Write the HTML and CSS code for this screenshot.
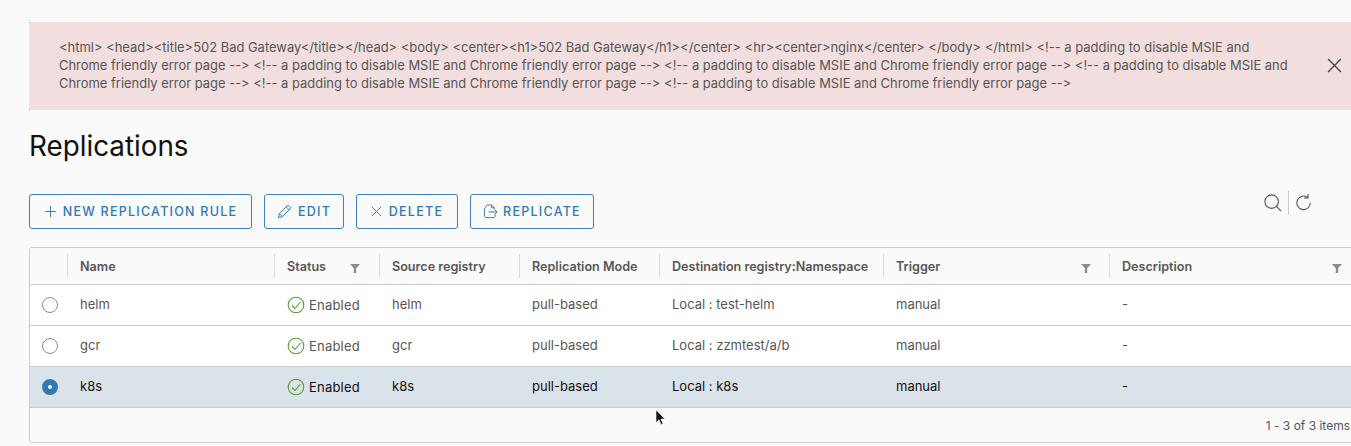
FILE: index.html
```html
<!DOCTYPE html>
<html lang="en">
<head>
  <meta charset="UTF-8">
  <title>Replications</title>
  <link rel="stylesheet" href="styles.css">
</head>
<body>
  <div class="alert">
    <p class="alert-text">&lt;html&gt; &lt;head&gt;&lt;title&gt;502 Bad Gateway&lt;/title&gt;&lt;/head&gt; &lt;body&gt; &lt;center&gt;&lt;h1&gt;502 Bad Gateway&lt;/h1&gt;&lt;/center&gt; &lt;hr&gt;&lt;center&gt;nginx&lt;/center&gt; &lt;/body&gt; &lt;/html&gt; &lt;!-- a padding to disable MSIE and<br>Chrome friendly error page --&gt; &lt;!-- a padding to disable MSIE and Chrome friendly error page --&gt; &lt;!-- a padding to disable MSIE and Chrome friendly error page --&gt; &lt;!-- a padding to disable MSIE and<br>Chrome friendly error page --&gt; &lt;!-- a padding to disable MSIE and Chrome friendly error page --&gt; &lt;!-- a padding to disable MSIE and Chrome friendly error page --&gt;</p>
    <svg class="alert-close" viewBox="0 0 14 14"><path d="M1 1l12 12M13 1L1 13"/></svg>
  </div>

  <h1 class="title">Replications</h1>

  <div class="toolbar">
    <button class="btn btn-new"><svg viewBox="0 0 14 14"><path d="M7 1v12M1 7h12"/></svg>NEW REPLICATION RULE</button>
    <button class="btn btn-edit"><svg viewBox="0 0 16 16"><path d="M1.5 14.5l1-4.2L11 1.8a1.2 1.2 0 0 1 1.7 0l1.5 1.5a1.2 1.2 0 0 1 0 1.7L5.700 13.500zM2.500 10.300l3.200 3.200M9.800 3l3.200 3.200"/></svg>EDIT</button>
    <button class="btn btn-delete"><svg viewBox="0 0 12 12"><path d="M1 1l10 10M11 1L1 11"/></svg>DELETE</button>
    <button class="btn btn-replicate"><svg viewBox="0 0 16 16"><path d="M12 5.500V4L9 1H4.500L3 2.500v1L1.500 5v8.500l1 1H12l1-1V11M9 1v3h3M6 8.500h9M12.500 6l2.500 2.500-2.500 2.500"/></svg>REPLICATE</button>
    <div class="tools">
      <svg class="tool-icon" viewBox="0 0 20 20"><circle cx="8.500" cy="8.500" r="7.500"/><path d="M14 14l5 5"/></svg>
      <span class="tool-sep"></span>
      <svg class="tool-icon" viewBox="0 0 20 20"><path d="M17 10a7.500 7.500 0 1 1-3-6.200M14.500 0v4.500H10"/></svg>
    </div>
  </div>

  <div class="grid">
    <div class="row head">
      <div class="cell"></div>
      <div class="cell">Name</div>
      <div class="cell">Status<svg class="filter" viewBox="0 0 10 10"><path d="M0 1h10L6.200 5.200V10H3.800V5.200z"/></svg></div>
      <div class="cell">Source registry</div>
      <div class="cell">Replication Mode</div>
      <div class="cell">Destination registry:Namespace</div>
      <div class="cell">Trigger<svg class="filter" viewBox="0 0 10 10"><path d="M0 1h10L6.200 5.200V10H3.800V5.200z"/></svg></div>
      <div class="cell">Description<svg class="filter" viewBox="0 0 10 10"><path d="M0 1h10L6.200 5.200V10H3.800V5.200z"/></svg></div>
    </div>

    <div class="row">
      <div class="cell"><span class="radio"></span></div>
      <div class="cell">helm</div>
      <div class="cell status"><svg class="ok" viewBox="0 0 18 18"><circle cx="9" cy="9" r="7.800"/><path d="M5 9.500l3 3 5.500-6.500"/></svg>Enabled</div>
      <div class="cell">helm</div>
      <div class="cell">pull-based</div>
      <div class="cell">Local : test-helm</div>
      <div class="cell">manual</div>
      <div class="cell">-</div>
    </div>
    <div class="row">
      <div class="cell"><span class="radio"></span></div>
      <div class="cell">gcr</div>
      <div class="cell status"><svg class="ok" viewBox="0 0 18 18"><circle cx="9" cy="9" r="7.800"/><path d="M5 9.500l3 3 5.500-6.500"/></svg>Enabled</div>
      <div class="cell">gcr</div>
      <div class="cell">pull-based</div>
      <div class="cell">Local : zzmtest/a/b</div>
      <div class="cell">manual</div>
      <div class="cell">-</div>
    </div>
    <div class="row selected">
      <div class="cell"><span class="radio checked"></span></div>
      <div class="cell">k8s</div>
      <div class="cell status"><svg class="ok" viewBox="0 0 18 18"><circle cx="9" cy="9" r="7.800"/><path d="M5 9.500l3 3 5.500-6.500"/></svg>Enabled</div>
      <div class="cell">k8s</div>
      <div class="cell">pull-based</div>
      <div class="cell">Local : k8s</div>
      <div class="cell">manual</div>
      <div class="cell">-</div>
    </div>

    <div class="grid-foot">1 - 3 of 3 items</div>
  </div>

  <svg class="cursor" viewBox="0 0 11 17"><path d="M1 1v12.500l3-2.800 2 4.800 2-.8-2-4.700h4z"/></svg>
</body>
</html>
```

FILE: styles.css
```css
* {
  box-sizing: border-box;
}
html, body {
  height: 446px;
  overflow: hidden;
}
body {
  margin: 0;
  padding: 22px 0 0 29px;
  background: #fafafa;
  color: #565656;
  font-family: Inter, "Noto Sans", sans-serif;
  font-size: 13px;
  font-variant-ligatures: none;
  font-feature-settings: "calt" 0;
}
svg {
  fill: none;
  stroke: currentColor;
  stroke-width: 1;
}

.alert {
  display: flex;
  align-items: center;
  justify-content: space-between;
  height: 88px;
  padding: 0 9px 0 29px;
  background: #f2dede;
  border-left: 1px solid #f2dede;
  border-image: linear-gradient(#7fa8cc 2px, #f2dede 2px, #f2dede 86px, #7fa8cc 86px) 1;
}
.alert-text {
  margin: -2px 0 0;
  font-size: 12.950px;
  line-height: 18px;
  color: #565656;
  white-space: nowrap;
}
.alert-close {
  width: 15px;
  height: 15px;
  margin-top: -2px;
  stroke: #444;
  stroke-width: 1.200;
}

.title {
  margin: 19px 0 0;
  font-size: 27.800px;
  font-weight: 400;
  line-height: 34px;
  color: #111;
}

.toolbar {
  display: flex;
  align-items: flex-start;
  gap: 12px;
  margin-top: 31px;
  height: 53px;
}
.btn {
  display: flex;
  align-items: center;
  justify-content: center;
  height: 35px;
  padding: 0;
  background: transparent;
  border: 1px solid #3f82ba;
  border-radius: 3px;
  color: #2f79b5;
  font-family: inherit;
  font-size: 12.500px;
  font-weight: 500;
  letter-spacing: 1.250px;
}
.btn svg {
  flex: none;
  margin-right: 6px;
}
.btn-new { width: 223px; }
.btn-new svg { width: 13px; height: 13px; }
.btn-edit { width: 80px; }
.btn-edit svg { width: 15px; height: 15px; }
.btn-delete { width: 102px; }
.btn-delete svg { width: 11px; height: 11px; margin-right: 7px; }
.btn-replicate { width: 124px; }
.btn-replicate svg { width: 15px; height: 15px; margin-right: 5px; }

.tools {
  display: flex;
  align-items: center;
  gap: 6px;
  margin-left: auto;
  margin-right: 38px;
  height: 24px;
  margin-top: -3px;
  color: #555;
}
.tool-icon {
  width: 18px;
  height: 18px;
  stroke-width: 1.200;
}
.tool-sep {
  width: 1px;
  height: 24px;
  background: #ccc;
}

.grid {
  width: 1340px;
  height: 196px;
  background: #fafafa;
  border: 1px solid #ccc;
  border-radius: 3px;
}
.row {
  display: grid;
  grid-template-columns: 38px 207px 105px 140px 140px 224px 226px 1fr;
  height: 41px;
  padding-bottom: 2px;
  background: #fff;
  border-bottom: 1px solid #ccc;
}
.cell {
  display: flex;
  align-items: center;
  padding-left: 12px;
}
.head {
  height: 37px;
  padding-bottom: 0;
  background: #fafafa;
  font-size: 12.600px;
  font-weight: 600;
  color: #565656;
}
.head .cell {
  position: relative;
}
.head .cell + .cell::before {
  content: "";
  position: absolute;
  left: -1px;
  top: 6px;
  bottom: 6px;
  width: 1px;
  background: #ddd;
}
.filter {
  width: 10px;
  height: 10px;
  margin-left: auto;
  margin-right: 20px;
  margin-top: 3px;
  fill: #8c8c8c;
  stroke: none;
}
.head .cell:last-child .filter {
  margin-right: 26px;
}
.head .cell:nth-child(7) .filter {
  margin-right: 19px;
}
.radio {
  width: 16px;
  height: 16px;
  margin-top: 2px;
  background: #fff;
  border: 1px solid #8c8c8c;
  border-radius: 50%;
}
.radio.checked {
  background: #fff;
  border: 6px solid #2f79b5;
}
.status {
  padding-top: 2px;
  letter-spacing: 0.200px;
}
.ok {
  width: 18px;
  height: 18px;
  margin-right: 4px;
  stroke: #5a9a3c;
  stroke-width: 1.100;
}
.selected {
  background: #dae2ea;
  color: #111;
}
.grid-foot {
  height: 34px;
  padding: 1px 1px 0 0;
  display: flex;
  align-items: center;
  justify-content: flex-end;
  width: 1321px;
  font-size: 12px;
}

.cursor {
  position: absolute;
  left: 655px;
  top: 409px;
  width: 11px;
  height: 17px;
  fill: #111;
  stroke: #fff;
  stroke-width: 0.600;
}
```
